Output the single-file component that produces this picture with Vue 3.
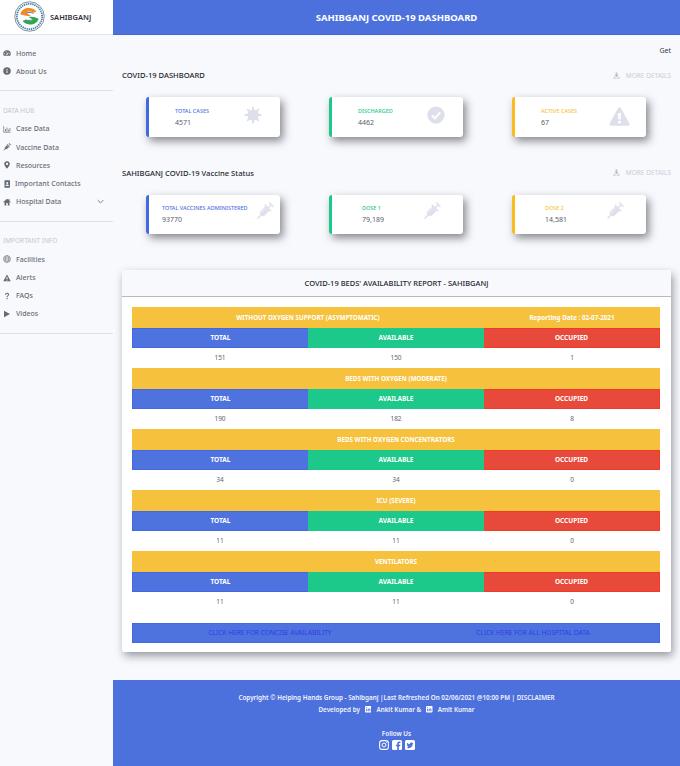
<template>
  <div class="page">
    <!-- ЛЕВАЯ КОЛОНКА -->
    <aside class="sidebar">
      <div class="brand">
        <svg class="logo" viewBox="0 0 32 32">
          <circle cx="16" cy="16" r="15.2" fill="#fff" stroke="#6d7f8c" stroke-width="0.9" />
          <circle cx="16" cy="16" r="13" fill="none" stroke="#3d7fb0" stroke-width="1.8" stroke-dasharray="1.4 0.8" />
          <circle cx="16" cy="16" r="10.8" fill="#fff" />
          <path d="M6.600 13.500C8 8.500 13 6.600 17.500 7.600c2.600.6 4.600 1.700 5.600 3.500l-3.100 1c-2.600-1.600-6-1.600-7.600.2 1.800.9 3.600 1.500 5 2.800-3.200 1-7.700-.2-11.800-1.600z" fill="#f58a1f" />
          <path d="M25.400 18.300c-1.200 4.700-6.200 6.600-10.600 5.800-2.800-.5-5-1.700-6-3.600l3.100-1c2.600 1.600 6.200 1.600 7.800-.4-1.700-.8-3.400-1.400-4.800-2.500 3.100-1 7-.1 10.500 1.700z" fill="#2fa84a" />
          <path d="M12.400 12.500c2.500-1 5-.8 7.600.2M11.500 19.500c2.800.9 5.400.7 8-.3" fill="none" stroke="#2b5fb3" stroke-width="0.9" />
        </svg>
        <span class="brand-name">SAHIBGANJ</span>
      </div>

      <nav class="nav">
        <template v-for="group in navGroups" :key="group.title">
          <div v-if="group.title" class="nav-title">{{ group.title }}</div>
          <a v-for="item in group.items" :key="item.label" class="nav-item">
            <svg class="nav-icon" viewBox="0 0 16 16" v-html="navIcons[item.icon]"></svg>
            <span class="nav-label" :class="{ tight: item.icon === 'contacts' }">{{ item.label }}</span>
            <svg v-if="item.more" class="chevron" viewBox="0 0 10 6">
              <path d="M1 1l4 4 4-4" fill="none" stroke="#6f7480" stroke-width="1.300" />
            </svg>
          </a>
          <div class="nav-line"></div>
        </template>
      </nav>
    </aside>

    <div class="main">
      <header class="topbar">SAHIBGANJ COVID-19 DASHBOARD</header>

      <section class="content">
        <div class="get">Get</div>

        <!-- КАРТОЧКИ -->
        <div v-for="block in statBlocks" :key="block.title" class="block">
          <div class="block-head">
            <h2>{{ block.title }}</h2>
            <span class="more">
              <svg viewBox="0 0 16 16"><path d="M6 1h4v6h3l-5 5-5-5h3zM1 12h3.500l2 2h3l2-2H15v3H1z" /></svg>
              MORE DETAILS
            </span>
          </div>
          <div class="stats">
            <div v-for="s in block.stats" :key="s.label" class="stat" :class="[s.tone, s.kind]">
              <div class="stat-text">
                <div class="stat-label">{{ s.label }}</div>
                <div class="stat-value">{{ s.value }}</div>
              </div>
              <svg class="stat-icon" :class="s.icon" viewBox="0 0 24 24" v-html="statIcons[s.icon]"></svg>
            </div>
          </div>
        </div>

        <!-- ТАБЛИЦА КОЕК -->
        <div class="report">
          <div class="report-head">COVID-19 BEDS' AVAILABILITY REPORT - SAHIBGANJ</div>
          <div class="report-body">
            <div v-for="g in beds" :key="g.title" class="bed-group">
              <div class="bed-title" :class="{ split: g.date }">
                <span>{{ g.title }}</span>
                <span v-if="g.date">{{ g.date }}</span>
              </div>
              <div class="bed-cell total">TOTAL</div>
              <div class="bed-cell avail">AVAILABLE</div>
              <div class="bed-cell occ">OCCUPIED</div>
              <div class="bed-num">{{ g.total }}</div>
              <div class="bed-num">{{ g.available }}</div>
              <div class="bed-num">{{ g.occupied }}</div>
            </div>
            <div class="links">
              <a>CLICK HERE FOR CONCISE AVAILABILITY</a>
              <a>CLICK HERE FOR ALL HOSPITAL DATA</a>
            </div>
          </div>
        </div>
      </section>

      <footer class="footer">
        <p>Copyright © Helping Hands Group - Sahibganj |Last Refreshed On 02/06/2021 @10:00 PM | DISCLAIMER</p>
        <p class="dev">
          Developed by
          <svg class="in" viewBox="0 0 16 16"><rect width="16" height="16" rx="2" fill="#fff" /><path d="M3 6.500h2.200V13H3zM3 3h2.200v2.200H3zM6.800 6.500h2.100v1c.5-.8 1.300-1.200 2.200-1.200 1.500 0 2.200 1 2.200 2.700v4h-2.200V9.400c0-.8-.3-1.200-.9-1.200-.7 0-1.200.5-1.200 1.300V13H6.800z" fill="#4c71dd" /></svg>
          Ankit Kumar &amp;
          <svg class="in" viewBox="0 0 16 16"><rect width="16" height="16" rx="2" fill="#fff" /><path d="M3 6.500h2.200V13H3zM3 3h2.200v2.200H3zM6.800 6.500h2.100v1c.5-.8 1.300-1.200 2.200-1.200 1.500 0 2.200 1 2.200 2.700v4h-2.200V9.400c0-.8-.3-1.200-.9-1.200-.7 0-1.200.5-1.200 1.300V13H6.800z" fill="#4c71dd" /></svg>
          Amit Kumar
        </p>
        <p class="follow">Follow Us</p>
        <div class="social">
          <svg viewBox="0 0 16 16">
            <rect x="1" y="1" width="14" height="14" rx="4" fill="none" stroke="#fff" stroke-width="1.700" />
            <circle cx="8" cy="8" r="3.100" fill="none" stroke="#fff" stroke-width="1.600" />
            <circle cx="12" cy="4" r="0.900" fill="#fff" />
          </svg>
          <svg viewBox="0 0 16 16">
            <rect width="16" height="16" rx="2.500" fill="#fff" />
            <path d="M11 16v-6h2l.4-2.500H11V6c0-.8.300-1.200 1.200-1.200h1.300V2.600c-.5-.1-1.200-.2-1.900-.2-2 0-3.200 1.200-3.200 3.300v1.800H6.300V10h2.100v6z" fill="#4c71dd" />
          </svg>
          <svg viewBox="0 0 16 16">
            <rect width="16" height="16" rx="2.500" fill="#fff" />
            <path d="M13.500 4.800c-.4.200-.9.300-1.300.4.500-.3.800-.7 1-1.200-.4.300-.9.500-1.400.6a2.300 2.300 0 0 0-3.900 2.100A6.400 6.400 0 0 1 3.200 4.300a2.300 2.300 0 0 0 .7 3c-.4 0-.7-.1-1-.3 0 1.100.8 2.100 1.800 2.300-.3.100-.7.100-1 0 .3.900 1.100 1.600 2.100 1.600A4.600 4.600 0 0 1 2.500 11.900a6.400 6.400 0 0 0 9.900-5.700c.4-.4.800-.8 1.100-1.400z" fill="#4c71dd" />
          </svg>
        </div>
      </footer>
    </div>
  </div>
</template>

<script setup>
const navGroups = [
  {
    title: "",
    items: [
      { label: "Home", icon: "gauge" },
      { label: "About Us", icon: "info" },
    ],
  },
  {
    title: "DATA HUB",
    items: [
      { label: "Case Data", icon: "chart" },
      { label: "Vaccine Data", icon: "syringe" },
      { label: "Resources", icon: "pin" },
      { label: "Important Contacts", icon: "contacts" },
      { label: "Hospital Data", icon: "house", more: true },
    ],
  },
  {
    title: "IMPORTANT INFO",
    items: [
      { label: "Facilities", icon: "globe" },
      { label: "Alerts", icon: "alert" },
      { label: "FAQs", icon: "question" },
      { label: "Videos", icon: "play" },
    ],
  },
];

// шприц рисуем вертикально и поворачиваем
const syringe =
  '<g transform="rotate(45 12 12)"><rect x="8" y="-1" width="8" height="2"/><rect x="11" y="1" width="2" height="5"/><rect x="6" y="5.500" width="12" height="2"/><path d="M8 7.500h8V18l-2 1.500h-1V26h-2v-6.500h-1L8 18z"/><path d="M8 10.500h3M8 13.500h3M8 16.500h3" stroke="#fff" stroke-width="1"/></g>';

// иконки меню, цвет берётся из fill в css
const navIcons = {
  gauge: '<path d="M8 2.500a7.500 7.500 0 0 0-7.500 7.500c0 1.300.3 2.500.9 3.500h13.200c.6-1 .9-2.200.9-3.500A7.500 7.500 0 0 0 8 2.500z"/><circle cx="8" cy="10.500" r="1.500" fill="#f8f9fd"/><path d="M8 10l3-4" stroke="#f8f9fd" stroke-width="1.200"/><circle cx="3.500" cy="9.500" r="1" fill="#f8f9fd"/><circle cx="12.500" cy="9.500" r="1" fill="#f8f9fd"/><circle cx="6" cy="5.500" r="1" fill="#f8f9fd"/>',
  info: '<circle cx="8" cy="8" r="7.500"/><rect x="7" y="7" width="2" height="5" fill="#f8f9fd"/><rect x="7" y="4" width="2" height="2" fill="#f8f9fd"/>',
  chart: '<path d="M1 2h1.300v11.700H15V15H1z"/><path d="M4 8h1.800v4.500H4zM7 5h1.800v7.500H7zM10 9h1.800v3.500H10zM13 6h1.800v6.500H13z" opacity=".8"/>',
  syringe: '<g transform="scale(.667)">' + syringe + "</g>",
  pin: '<path fill-rule="evenodd" d="M8 .5a5.500 5.500 0 0 0-5.500 5.500C2.500 9 8 15.500 8 15.500S13.500 9 13.500 6A5.500 5.500 0 0 0 8 .5zm0 3.200a2.300 2.300 0 1 1 0 4.600 2.300 2.300 0 0 1 0-4.600z"/>',
  contacts: '<path fill-rule="evenodd" d="M3 .5h9.500A1.500 1.500 0 0 1 14 2v12a1.500 1.500 0 0 1-1.500 1.500H3zM8.500 4a2 2 0 1 0 0 4 2 2 0 0 0 0-4zM5 12h7c0-1.800-1.500-3-3.500-3S5 10.200 5 12z"/>',
  house: '<path fill-rule="evenodd" d="M8 1.500L.5 8l1 1L3 7.700V15h10V7.700L14.500 9l1-1L13 5.800V2h-2v2L8 1.500zM6.500 10h3v5h-3z"/>',
  globe: '<circle cx="8" cy="8" r="6.800" fill="none" stroke="currentColor" stroke-width="1.300"/><ellipse cx="8" cy="8" rx="3" ry="6.800" fill="none" stroke="currentColor" stroke-width="1.100"/><path d="M1.500 6h13M1.500 10h13" stroke="currentColor" stroke-width="1.100"/>',
  alert: '<path fill-rule="evenodd" d="M8 1l7.500 13.500H.5zM7 6v4.500h2V6zm0 5.500v1.700h2v-1.700z"/>',
  question: '<path d="M4 5.500C4 3 6 1.500 8.200 1.500c2.300 0 4 1.400 4 3.500 0 2.900-3.200 3-3.200 5.500H7c0-3.400 3-3.400 3-5.500 0-1-.8-1.700-1.900-1.700-1.100 0-1.900.8-2 2.200zM6.900 12h2.200v2.500H6.900z"/>',
  play: '<path d="M2 1.500l12 6.500-12 6.500z"/>',
};

const statIcons = {
  virus:
    '<circle cx="12" cy="12" r="7.500"/><circle cx="10" cy="10.500" r="1.700" fill="#fff"/><circle cx="14.500" cy="14" r="1.100" fill="#fff"/><path d="M12 1v22M1 12h22M4.200 4.200l15.600 15.600M19.800 4.200L4.200 19.800" stroke="currentColor" stroke-width="2.600"/>',
  check:
    '<circle cx="12" cy="12" r="11.500"/><path d="M6.500 12.500l4 4 7-8" fill="none" stroke="#fff" stroke-width="2.800"/>',
  warning:
    '<path fill-rule="evenodd" d="M12 1.500c.7 0 1.300.4 1.700 1l9.600 17.500c.6 1.200-.2 2.500-1.600 2.500H2.300C.9 22.500.1 21.200.7 20L10.300 2.500c.4-.6 1-1 1.700-1zM10.300 8l.4 7.500h2.600l.4-7.500zM12 16.500a1.900 1.900 0 1 0 0 3.800 1.900 1.900 0 0 0 0-3.800z"/>',
  syringe,
};

const statBlocks = [
  {
    title: "COVID-19 DASHBOARD",
    stats: [
      { label: "TOTAL CASES", value: "4571", tone: "blue", icon: "virus" },
      { label: "DISCHARGED", value: "4462", tone: "green", icon: "check" },
      { label: "ACTIVE CASES", value: "67", tone: "amber", icon: "warning" },
    ],
  },
  {
    title: "SAHIBGANJ COVID-19 Vaccine Status",
    stats: [
      { label: "TOTAL VACCINES ADMINISTERED", value: "93770", tone: "blue", icon: "syringe", kind: "long" },
      { label: "DOSE 1", value: "79,189", tone: "green", icon: "syringe", kind: "dose" },
      { label: "DOSE 2", value: "14,581", tone: "amber", icon: "syringe", kind: "dose" },
    ],
  },
];

const beds = [
  { title: "WITHOUT OXYGEN SUPPORT (ASYMPTOMATIC)", date: "Reporting Date : 02-07-2021", total: 151, available: 150, occupied: 1 },
  { title: "BEDS WITH OXYGEN (MODERATE)", total: 190, available: 182, occupied: 8 },
  { title: "BEDS WITH OXYGEN CONCENTRATORS", total: 34, available: 34, occupied: 0 },
  { title: "ICU (SEVERE)", total: 11, available: 11, occupied: 0 },
  { title: "VENTILATORS", total: 11, available: 11, occupied: 0 },
];
</script>

<style>
html,
body {
  margin: 0;
  background: #f8f9fd;
}
</style>

<style scoped>
.page {
  display: flex;
  width: 680px;
  height: 766px;
  overflow: hidden;
  font-family: "Noto Sans", "Open Sans", sans-serif;
  background: #f8f9fd;
  color: #5a5c69;
}

/* === САЙДБАР === */
.sidebar {
  width: 113px;
  flex: none;
}

.brand {
  display: flex;
  align-items: center;
  gap: 5px;
  height: 35px;
  padding-left: 14px;
  box-sizing: border-box;
  background: #fff;
  border-bottom: 1px solid #e3e4ea;
}

.logo {
  width: 31px;
  height: 31px;
  margin-bottom: 2px;
}

.brand-name {
  font-size: 7.500px;
  font-weight: 600;
  color: #2e2f38;
}

.nav {
  padding-top: 9px;
}

.nav-item {
  display: flex;
  align-items: center;
  height: 18.200px;
  padding-left: 3px;
}

.nav-icon {
  width: 8px;
  height: 8px;
  flex: none;
  margin-right: 5px;
  fill: #666a75;
  color: #666a75;
}

.nav-label {
  font-size: 7px;
  font-weight: 500;
  color: #686c76;
}

.nav-label.tight {
  margin-left: -1px;
}

.chevron {
  width: 7px;
  height: 5px;
  margin-left: auto;
  margin-right: 9px;
}

.nav-line {
  height: 1px;
  background: #e1e2e8;
  margin-top: 10px;
}

.nav-title {
  font-size: 6.500px;
  color: #c4c6d0;
  padding: 14.500px 0 4px 3px;
  line-height: 10px;
}

/* === ШАПКА === */
.main {
  flex: 1;
  min-width: 0;
  display: flex;
  flex-direction: column;
}

.topbar {
  height: 35px;
  flex: none;
  display: flex;
  align-items: center;
  justify-content: center;
  background: #4c71dd;
  border-bottom: 1px solid #3f66db;
  box-sizing: border-box;
  color: #fff;
  font-size: 9.500px;
  font-weight: 700;
}

.content {
  flex: 1;
  padding: 11px 9px 0 9px;
}

.get {
  text-align: right;
  font-size: 7px;
  line-height: 9px;
  color: #3a3b45;
  height: 24px;
}

.block {
  height: 97.500px;
}

.block-head {
  display: flex;
  align-items: center;
  justify-content: space-between;
  height: 10px;
}

.block-head h2 {
  margin: 0;
  font-size: 7.600px;
  font-weight: 500;
  color: #26272e;
}

.more {
  display: flex;
  align-items: center;
  gap: 5.500px;
  font-size: 6.500px;
  color: #c9ccd9;
}

.more svg {
  width: 7px;
  height: 7px;
  fill: #b9bdcf;
}

.stats {
  display: flex;
  gap: 49px;
  margin: 17px 0 0 24px;
}

.stat {
  width: 134px;
  height: 39.500px;
  flex: none;
  display: flex;
  align-items: center;
  justify-content: space-between;
  box-sizing: border-box;
  padding: 0 18px 0 26px;
  background: #fff;
  border-left: 3.500px solid;
  border-radius: 3px;
  box-shadow: 3px 4px 8px rgba(40, 40, 50, 0.55);
}

.stat.long {
  padding: 0 6px 0 13px;
}

.stat.dose {
  padding: 0 22px 0 30px;
}

.stat.blue {
  border-color: #4169e1;
}

.stat.green {
  border-color: #1cc88a;
}

.stat.amber {
  border-color: #f9bb1f;
}

.blue .stat-label {
  color: #4e73df;
}

.green .stat-label {
  color: #1cc88a;
}

.amber .stat-label {
  color: #f6c23e;
}

.stat-label {
  font-size: 5.500px;
  font-weight: 500;
  line-height: 8px;
  white-space: nowrap;
}

.stat-value {
  font-size: 7px;
  line-height: 9px;
  margin-top: 3px;
  color: #5a5c69;
}

.stat-icon {
  width: 18px;
  height: 18px;
  flex: none;
  margin-bottom: 3px;
  overflow: visible;
  fill: #dddfeb;
  color: #dddfeb;
}

.stat-icon.warning {
  width: 21px;
  height: 21px;
  margin-right: -2px;
  margin-bottom: 1px;
}

.stat-icon.syringe {
  margin-bottom: 6px;
}

/* === ОТЧЁТ === */
.report {
  margin-top: 5px;
  background: #fff;
  border-radius: 2px;
  box-shadow: 2px 4px 9px rgba(40, 40, 50, 0.45);
}

.report-head {
  height: 27px;
  display: flex;
  align-items: center;
  justify-content: center;
  background: #f8f9fd;
  border-bottom: 1px solid #b9b9bd;
  box-sizing: border-box;
  font-size: 7.500px;
  font-weight: 500;
  color: #26272e;
}

.report-body {
  padding: 10px 11px 9.500px 10px;
}

.bed-group {
  display: grid;
  grid-template-columns: repeat(3, 1fr);
}

.bed-title {
  grid-column: 1 / -1;
  height: 20.500px;
  display: flex;
  align-items: center;
  justify-content: center;
  background: #f6c23e;
  color: #fff;
  font-size: 6.250px;
  font-weight: 700;
}

.bed-title.split {
  display: grid;
  grid-template-columns: 2fr 1fr;
  text-align: center;
}

.bed-cell {
  height: 20px;
  display: flex;
  align-items: center;
  justify-content: center;
  box-sizing: border-box;
  color: #fff;
  font-size: 6.500px;
  font-weight: 700;
}

.total {
  background: #4e73df;
  border: 1px solid #4169e1;
  border-right: 0;
}

.avail {
  background: #1cc88a;
}

.occ {
  background: #e74a3b;
  border: 1px solid #f03a2a;
  border-left: 0;
}

.bed-num {
  height: 20.500px;
  display: flex;
  align-items: center;
  justify-content: center;
  font-size: 6.500px;
  color: #62646f;
}

.links {
  display: grid;
  grid-template-columns: 274px 1fr;
  margin-top: 10.500px;
  height: 20px;
  align-items: center;
  background: #4e73df;
  border: 1px solid #4169e1;
  box-sizing: border-box;
  text-align: center;
  font-size: 6.600px;
  color: #2e3ce6;
}

/* === ФУТЕР === */
.footer {
  height: 86px;
  flex: none;
  box-sizing: border-box;
  padding-top: 12px;
  background: #4c71dd;
  color: #f3f5fc;
  text-align: center;
  font-size: 6.300px;
  font-weight: 600;
}

.footer p {
  margin: 0;
  line-height: 11.500px;
}

.dev {
  display: flex;
  align-items: center;
  justify-content: center;
  gap: 4px;
}

.in {
  width: 6.500px;
  height: 6.500px;
  margin: 0 1px;
}

.footer .follow {
  margin-top: 13px;
}

.social {
  display: flex;
  justify-content: center;
  gap: 3px;
}

.social svg {
  width: 10px;
  height: 10px;
}
</style>
